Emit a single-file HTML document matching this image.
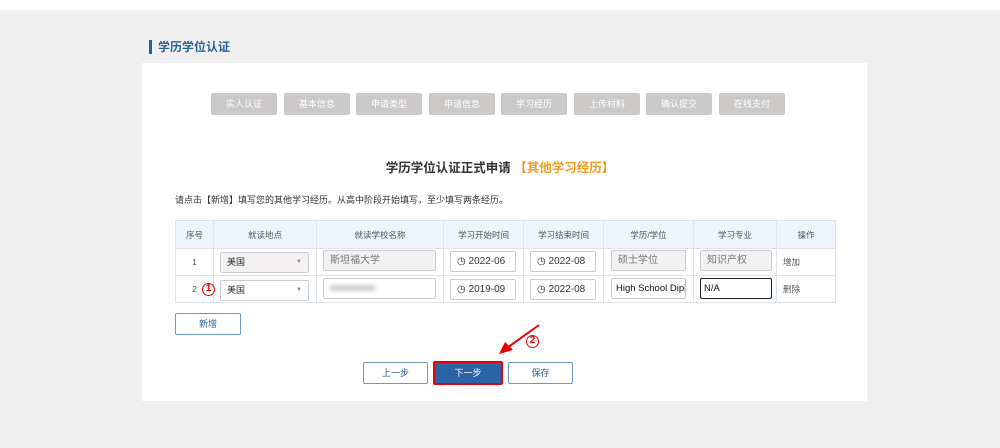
<!DOCTYPE html>
<html><head><meta charset="utf-8"><style>
*{margin:0;padding:0;box-sizing:border-box}
body{width:1000px;height:448px;background:#f0f0f0;font-family:"Liberation Sans","Noto Sans CJK SC",sans-serif;position:relative;overflow:hidden;color:#333}
.a{position:absolute}
.top{left:0;top:0;width:1000px;height:10px;background:#fff}
.hd{left:149px;top:40px;font-size:12px;font-weight:bold;color:#2a5f9e;border-left:3px solid #2a5f9e;padding-left:6px;line-height:14px}
.panel{left:142px;top:63px;width:725px;height:338px;background:#fff}
.step{top:93px;width:66px;height:22px;background:#cbc8c8;color:#fff;font-size:9px;text-align:center;line-height:22px;border-radius:2px}
.title{left:0;width:1000px;top:157px;text-align:center;font-size:12.5px;font-weight:bold;color:#333}
.title span{color:#f39a1e}
.ins{left:175px;top:193px;font-size:9px;color:#333}
table{position:absolute;left:175px;top:220px;border-collapse:collapse;font-size:8.5px;color:#555}
td,th{border:1px solid #dde3ea;font-weight:normal;height:27px}
th{background:#eef4fb;height:28px}
.in{border:1px solid #ccc;border-radius:2px;height:21px;font-size:10px;line-height:19px;padding-left:6px;position:absolute;color:#333}
.g{background:#f3f1f1;color:#777}
.btn{top:362px;height:22px;width:65px;border:1px solid #6b95c8;border-radius:2px;font-size:9px;text-align:center;line-height:20px;color:#2a5f9e;background:#fff}
.num{color:#e00;font-size:10px;font-weight:bold;width:13px;height:13px;border:1.5px solid #e00;border-radius:50%;text-align:center;line-height:10px}
</style></head><body>
<div class="a top"></div>
<div class="a hd">学历学位认证</div>
<div class="a panel"></div>
<div class="a step" style="left:211px">实人认证</div>
<div class="a step" style="left:284px">基本信息</div>
<div class="a step" style="left:356px">申请类型</div>
<div class="a step" style="left:429px">申请信息</div>
<div class="a step" style="left:501px">学习经历</div>
<div class="a step" style="left:574px">上传材料</div>
<div class="a step" style="left:646px">确认提交</div>
<div class="a step" style="left:719px">在线支付</div>
<div class="a title">学历学位认证正式申请 <span>【其他学习经历】</span></div>
<div class="a ins">请点击【新增】填写您的其他学习经历。从高中阶段开始填写，至少填写两条经历。</div>
<table>
<tr><th style="width:38px">序号</th><th style="width:103px">就读地点</th><th style="width:127px">就读学校名称</th><th style="width:80px">学习开始时间</th><th style="width:80px">学习结束时间</th><th style="width:90px">学历/学位</th><th style="width:83px">学习专业</th><th style="width:59px">操作</th></tr>
<tr><td style="text-align:center">1</td><td></td><td></td><td></td><td></td><td></td><td></td><td style="padding-left:6px">增加</td></tr>
<tr><td style="text-align:center">2</td><td></td><td></td><td></td><td></td><td></td><td></td><td style="padding-left:6px">删除</td></tr>
</table>
<div class="a in g" style="left:220px;top:252px;width:89px;font-size:9px;color:#333">美国<span style="position:absolute;right:6px;font-size:6px;color:#888">▼</span></div>
<div class="a in" style="left:220px;top:280px;width:89px;font-size:9px">美国<span style="position:absolute;right:6px;font-size:6px;color:#888">▼</span></div>
<div class="a in g" style="left:323px;top:250px;width:113px">斯坦福大学</div>
<div class="a in" style="left:323px;top:278px;width:113px"><span style="display:inline-block;width:45px;height:6px;background:#ccc;filter:blur(2px);margin-top:6px"></span></div>
<div class="a in" style="left:450px;top:251px;width:66px">◷ 2022-06</div>
<div class="a in" style="left:530px;top:251px;width:66px">◷ 2022-08</div>
<div class="a in" style="left:450px;top:279px;width:66px">◷ 2019-09</div>
<div class="a in" style="left:530px;top:279px;width:66px">◷ 2022-08</div>
<div class="a in g" style="left:611px;top:250px;width:75px">硕士学位</div>
<div class="a in" style="left:611px;top:278px;width:75px;font-size:9.5px;color:#111;white-space:nowrap;overflow:hidden;padding-left:4px">High School Diplo</div>
<div class="a in g" style="left:700px;top:250px;width:72px">知识产权</div>
<div class="a in" style="left:700px;top:278px;width:72px;border:1.5px solid #222;color:#111;font-size:9.5px;padding-left:3px">N/A</div>
<div class="a num" style="left:202px;top:283px">1</div>
<div class="a btn" style="left:175px;top:313px;width:66px">新增</div>
<div class="a btn" style="left:363px">上一步</div>
<div class="a btn" style="left:433px;width:70px;height:24px;top:361px;background:#2a63a8;color:#fff;border:2px solid #e00;line-height:20px">下一步</div>
<div class="a btn" style="left:508px">保存</div>
<div class="a num" style="left:526px;top:335px">2</div>
<svg class="a" style="left:495px;top:320px" width="50" height="40"><line x1="44" y1="5" x2="12" y2="28" stroke="#e00" stroke-width="2"/><polygon points="4,34 10,22 18,30" fill="#e00"/></svg>
</body></html>
